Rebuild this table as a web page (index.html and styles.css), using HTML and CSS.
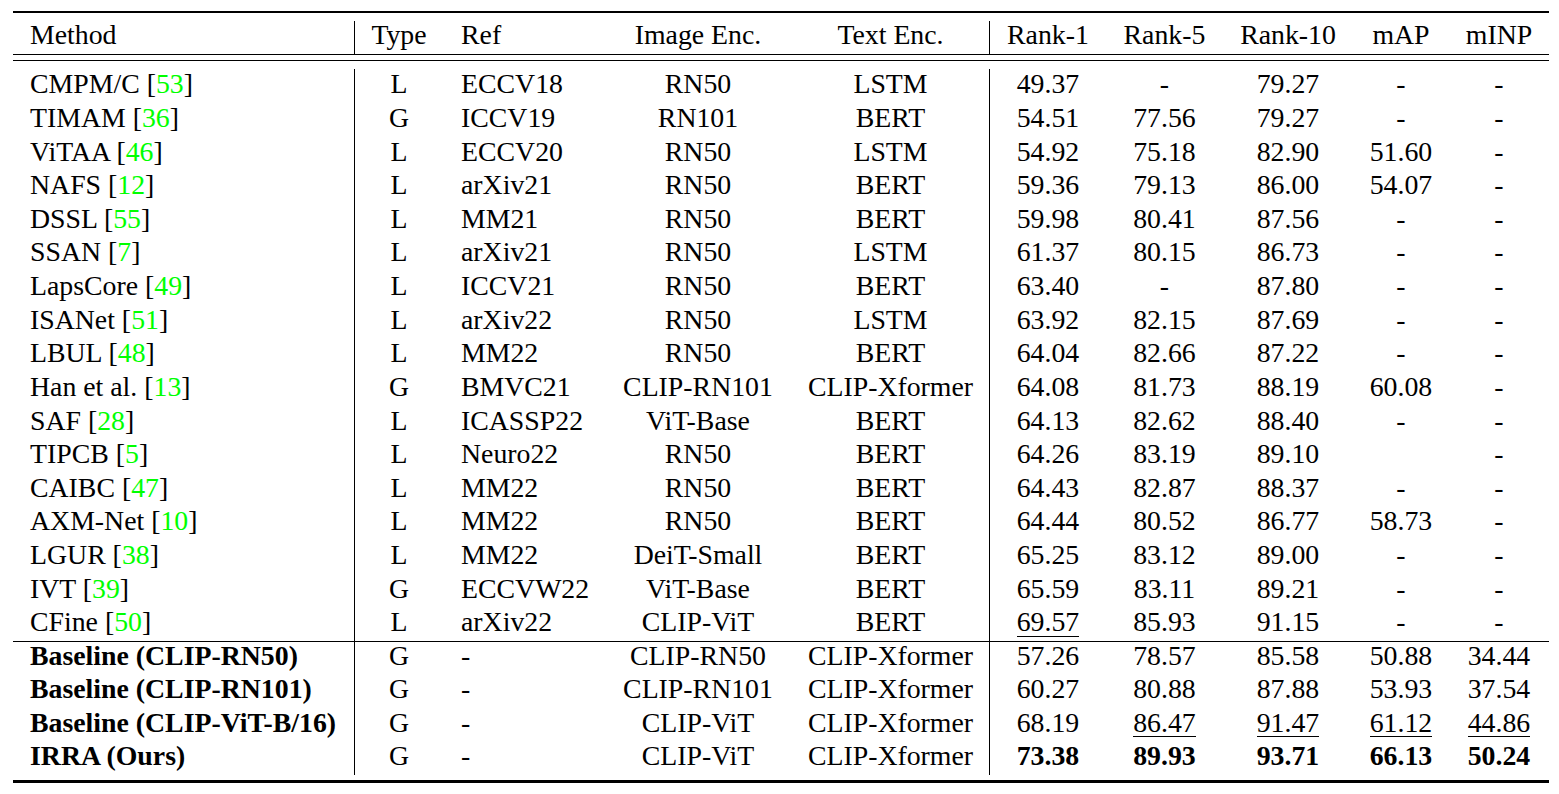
FILE: index.html
```html
<!DOCTYPE html>
<html>
<head>
<meta charset="utf-8">
<link rel="stylesheet" href="styles.css">
</head>
<body>
<div class="table">
  <div class="rule-top"></div>
  <div class="row head">
    <div class="c m">Method</div><div class="c vl">Type</div><div class="c r">Ref</div><div class="c">Image Enc.</div><div class="c">Text Enc.</div>
    <div class="c vl">Rank-1</div><div class="c">Rank-5</div><div class="c">Rank-10</div><div class="c">mAP</div><div class="c">mINP</div>
  </div>
  <div class="rule-thin"></div>
  <div class="rule-thin second"></div>
  <div class="group one">
    <div class="row"><div class="c m">CMPM/C [<span class="cite">53</span>]</div><div class="c vl">L</div><div class="c r">ECCV18</div><div class="c">RN50</div><div class="c">LSTM</div><div class="c vl">49.37</div><div class="c">-</div><div class="c">79.27</div><div class="c">-</div><div class="c">-</div></div>
    <div class="row"><div class="c m">TIMAM [<span class="cite">36</span>]</div><div class="c vl">G</div><div class="c r">ICCV19</div><div class="c">RN101</div><div class="c">BERT</div><div class="c vl">54.51</div><div class="c">77.56</div><div class="c">79.27</div><div class="c">-</div><div class="c">-</div></div>
    <div class="row"><div class="c m">ViTAA [<span class="cite">46</span>]</div><div class="c vl">L</div><div class="c r">ECCV20</div><div class="c">RN50</div><div class="c">LSTM</div><div class="c vl">54.92</div><div class="c">75.18</div><div class="c">82.90</div><div class="c">51.60</div><div class="c">-</div></div>
    <div class="row"><div class="c m">NAFS [<span class="cite">12</span>]</div><div class="c vl">L</div><div class="c r">arXiv21</div><div class="c">RN50</div><div class="c">BERT</div><div class="c vl">59.36</div><div class="c">79.13</div><div class="c">86.00</div><div class="c">54.07</div><div class="c">-</div></div>
    <div class="row"><div class="c m">DSSL [<span class="cite">55</span>]</div><div class="c vl">L</div><div class="c r">MM21</div><div class="c">RN50</div><div class="c">BERT</div><div class="c vl">59.98</div><div class="c">80.41</div><div class="c">87.56</div><div class="c">-</div><div class="c">-</div></div>
    <div class="row"><div class="c m">SSAN [<span class="cite">7</span>]</div><div class="c vl">L</div><div class="c r">arXiv21</div><div class="c">RN50</div><div class="c">LSTM</div><div class="c vl">61.37</div><div class="c">80.15</div><div class="c">86.73</div><div class="c">-</div><div class="c">-</div></div>
    <div class="row"><div class="c m">LapsCore [<span class="cite">49</span>]</div><div class="c vl">L</div><div class="c r">ICCV21</div><div class="c">RN50</div><div class="c">BERT</div><div class="c vl">63.40</div><div class="c">-</div><div class="c">87.80</div><div class="c">-</div><div class="c">-</div></div>
    <div class="row"><div class="c m">ISANet [<span class="cite">51</span>]</div><div class="c vl">L</div><div class="c r">arXiv22</div><div class="c">RN50</div><div class="c">LSTM</div><div class="c vl">63.92</div><div class="c">82.15</div><div class="c">87.69</div><div class="c">-</div><div class="c">-</div></div>
    <div class="row"><div class="c m">LBUL [<span class="cite">48</span>]</div><div class="c vl">L</div><div class="c r">MM22</div><div class="c">RN50</div><div class="c">BERT</div><div class="c vl">64.04</div><div class="c">82.66</div><div class="c">87.22</div><div class="c">-</div><div class="c">-</div></div>
    <div class="row"><div class="c m">Han et al. [<span class="cite">13</span>]</div><div class="c vl">G</div><div class="c r">BMVC21</div><div class="c">CLIP-RN101</div><div class="c">CLIP-Xformer</div><div class="c vl">64.08</div><div class="c">81.73</div><div class="c">88.19</div><div class="c">60.08</div><div class="c">-</div></div>
    <div class="row"><div class="c m">SAF [<span class="cite">28</span>]</div><div class="c vl">L</div><div class="c r">ICASSP22</div><div class="c">ViT-Base</div><div class="c">BERT</div><div class="c vl">64.13</div><div class="c">82.62</div><div class="c">88.40</div><div class="c">-</div><div class="c">-</div></div>
    <div class="row"><div class="c m">TIPCB [<span class="cite">5</span>]</div><div class="c vl">L</div><div class="c r">Neuro22</div><div class="c">RN50</div><div class="c">BERT</div><div class="c vl">64.26</div><div class="c">83.19</div><div class="c">89.10</div><div class="c"></div><div class="c">-</div></div>
    <div class="row"><div class="c m">CAIBC [<span class="cite">47</span>]</div><div class="c vl">L</div><div class="c r">MM22</div><div class="c">RN50</div><div class="c">BERT</div><div class="c vl">64.43</div><div class="c">82.87</div><div class="c">88.37</div><div class="c">-</div><div class="c">-</div></div>
    <div class="row"><div class="c m">AXM-Net [<span class="cite">10</span>]</div><div class="c vl">L</div><div class="c r">MM22</div><div class="c">RN50</div><div class="c">BERT</div><div class="c vl">64.44</div><div class="c">80.52</div><div class="c">86.77</div><div class="c">58.73</div><div class="c">-</div></div>
    <div class="row"><div class="c m">LGUR [<span class="cite">38</span>]</div><div class="c vl">L</div><div class="c r">MM22</div><div class="c">DeiT-Small</div><div class="c">BERT</div><div class="c vl">65.25</div><div class="c">83.12</div><div class="c">89.00</div><div class="c">-</div><div class="c">-</div></div>
    <div class="row"><div class="c m">IVT [<span class="cite">39</span>]</div><div class="c vl">G</div><div class="c r">ECCVW22</div><div class="c">ViT-Base</div><div class="c">BERT</div><div class="c vl">65.59</div><div class="c">83.11</div><div class="c">89.21</div><div class="c">-</div><div class="c">-</div></div>
    <div class="row"><div class="c m">CFine [<span class="cite">50</span>]</div><div class="c vl">L</div><div class="c r">arXiv22</div><div class="c">CLIP-ViT</div><div class="c">BERT</div><div class="c vl"><span class="u">69.57</span></div><div class="c">85.93</div><div class="c">91.15</div><div class="c">-</div><div class="c">-</div></div>
  </div>
  <div class="rule-mid"></div>
  <div class="group two">
    <div class="row"><div class="c m b">Baseline (CLIP-RN50)</div><div class="c vl">G</div><div class="c r">-</div><div class="c">CLIP-RN50</div><div class="c">CLIP-Xformer</div><div class="c vl">57.26</div><div class="c">78.57</div><div class="c">85.58</div><div class="c">50.88</div><div class="c">34.44</div></div>
    <div class="row"><div class="c m b">Baseline (CLIP-RN101)</div><div class="c vl">G</div><div class="c r">-</div><div class="c">CLIP-RN101</div><div class="c">CLIP-Xformer</div><div class="c vl">60.27</div><div class="c">80.88</div><div class="c">87.88</div><div class="c">53.93</div><div class="c">37.54</div></div>
    <div class="row"><div class="c m b">Baseline (CLIP-ViT-B/16)</div><div class="c vl">G</div><div class="c r">-</div><div class="c">CLIP-ViT</div><div class="c">CLIP-Xformer</div><div class="c vl">68.19</div><div class="c"><span class="u">86.47</span></div><div class="c"><span class="u">91.47</span></div><div class="c"><span class="u">61.12</span></div><div class="c"><span class="u">44.86</span></div></div>
    <div class="row"><div class="c m b">IRRA (Ours)</div><div class="c vl">G</div><div class="c r">-</div><div class="c">CLIP-ViT</div><div class="c">CLIP-Xformer</div><div class="c vl b">73.38</div><div class="c b">89.93</div><div class="c b">93.71</div><div class="c b">66.13</div><div class="c b">50.24</div></div>
  </div>
  <div class="rule-bottom"></div>
</div>
</body>
</html>
```

FILE: styles.css
```css
html, body {
  margin: 0;
  padding: 0;
  background: #ffffff;
}

.table {
  margin: 11px 0 0 13px;
  width: 1536px;
  font-family: "Liberation Serif", "Times New Roman", serif;
  font-size: 27.8px;
  color: #000000;
}

.rule-top {
  height: 2px;
  background: #000000;
}

.rule-bottom {
  margin-top: 5px;
  height: 2.5px;
  background: #000000;
}

.rule-thin {
  height: 1px;
  background: #000000;
}

.rule-thin.second {
  margin-top: 5.3px;
}

.rule-mid {
  height: 1px;
  background: #000000;
}

.row {
  display: grid;
  grid-template-columns: 341px 89px 161px 188px 197px 117px 117px 130px 96px 100px;
  height: 33.64px;
  line-height: 29.4px;
  align-items: start;
}

.row.head {
  margin-top: 8px;
  height: 33px;
  line-height: 27.2px;
}

.group.one {
  margin-top: 8px;
}

.group.two .row {
  height: 33.4px;
  line-height: 27.6px;
}

.c {
  box-sizing: border-box;
  height: 100%;
  text-align: center;
  white-space: nowrap;
}

.c.m {
  text-align: left;
  padding-left: 17px;
}

.c.r {
  text-align: left;
  padding-left: 18px;
}

.vl {
  border-left: 1px solid #000000;
}

.b {
  font-weight: bold;
}

.cite {
  color: #00ff00;
}

.u {
  background-image: linear-gradient(#000000, #000000);
  background-repeat: no-repeat;
  background-size: 100% 1px;
  background-position: 0 29.4px;
}
```
